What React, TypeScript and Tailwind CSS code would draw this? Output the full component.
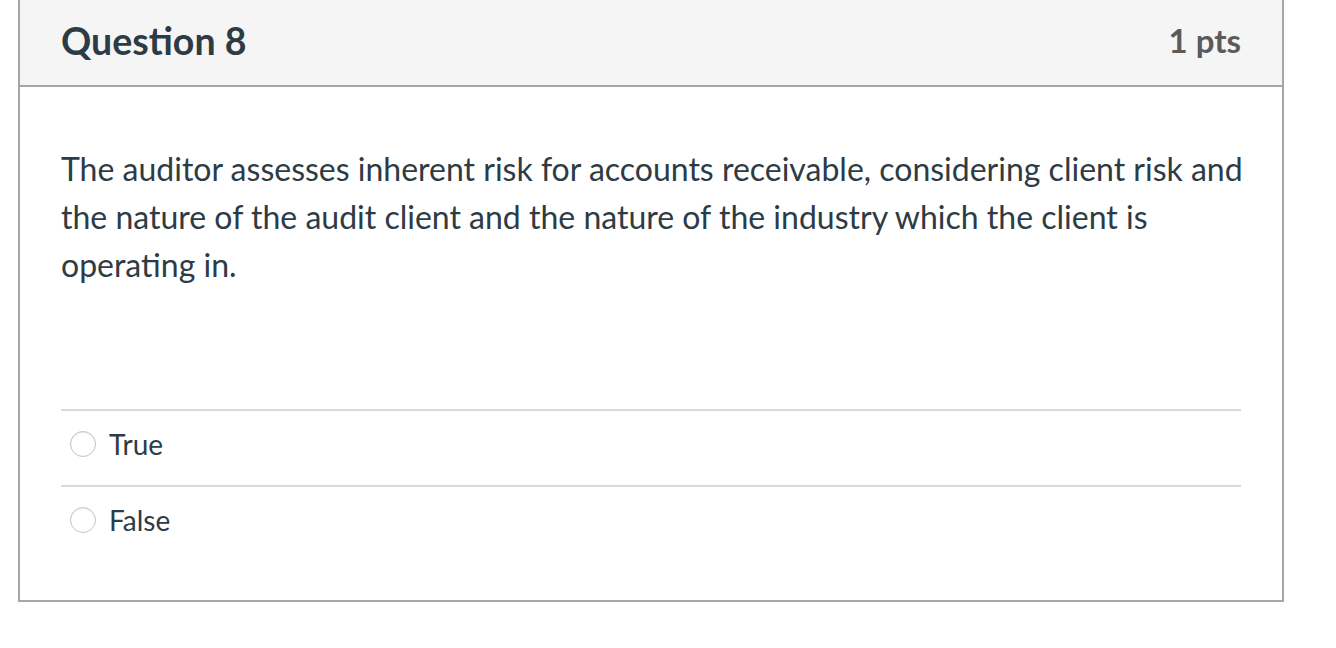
import React from "react";

function Radio() {
  return (
    <span className="inline-block w-[26px] h-[26px] rounded-full border border-[#c4c4c4] bg-white shadow-[inset_0_1px_1px_rgba(0,0,0,0.08)]" />
  );
}

export default function App() {
  const font = { fontFamily: "Lato, 'Noto Sans', sans-serif" };
  return (
    <div className="w-[1336px] h-[648px] bg-white overflow-hidden" style={font}>
      <div className="ml-[18px] w-[1266px] border-x-2 border-b-2 border-[#a6a6a6]">
        <div className="h-[87px] bg-[#f5f5f5] border-b-2 border-[#a6a6a6] px-[41px] pb-[4px] flex items-center justify-between">
          <div className="text-[37.5px] font-bold text-[#2d3b45] leading-none">Question 8</div>
          <div className="text-[33px] font-bold text-[#5b5b5b] leading-none">1 pts</div>
        </div>
        <div className="px-[41px] pt-[58px] pb-[39px]">
          <p className="text-[32px] leading-[48px] text-[#2d3b45] -mr-[8px]">
            The auditor assesses inherent risk for accounts receivable, considering client risk and the nature of the audit client and the nature of the industry which the client is operating in.
          </p>
          <div className="mt-[120px]">
            {["True", "False"].map((a) => (
              <div key={a} className="h-[76px] border-t-2 border-[#dadada] flex items-center pl-[9px] gap-[13px] pb-[8px]">
                <Radio />
                <span className="text-[28px] text-[#2d3b45] leading-none">{a}</span>
              </div>
            ))}
          </div>
        </div>
      </div>
    </div>
  );
}
